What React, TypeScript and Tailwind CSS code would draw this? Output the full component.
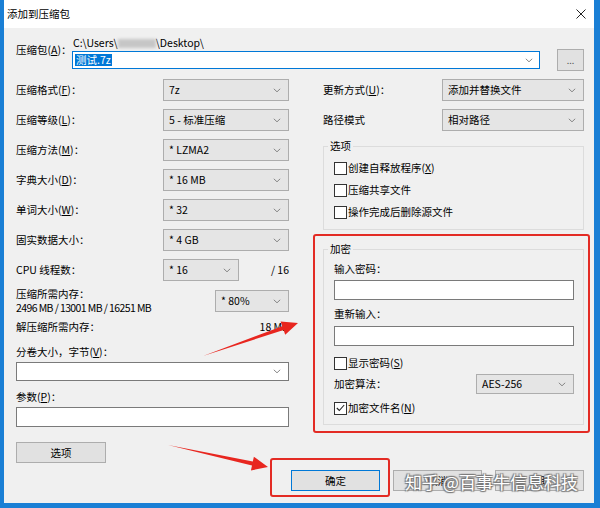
import React from "react";

function Chevron() {
  return (
    <svg width="8" height="5" viewBox="0 0 8 5" className="shrink-0">
      <path d="M0.8 0.8 L4 3.8 L7.2 0.8" fill="none" stroke="#7a7a7a" strokeWidth="0.9" />
    </svg>
  );
}

function Combo({ value, className }: { value: string; className: string }) {
  return (
    <div
      className={
        "flex items-center justify-between border border-[#adadad] bg-[#e5e5e5] pl-[5px] pr-[7px] " +
        className
      }
    >
      <span className="leading-[14px] whitespace-nowrap">{value}</span>
      <Chevron />
    </div>
  );
}

function Check({ label, checked, className }: { label: React.ReactNode; checked?: boolean; className: string }) {
  return (
    <div className={"flex items-center " + className}>
      <span className="w-[13px] h-[13px] border border-[#333333] bg-white flex items-center justify-center shrink-0">
        {checked && (
          <svg width="9" height="8" viewBox="0 0 9 8">
            <path d="M0.8 4 L3.3 6.5 L8.2 1" fill="none" stroke="#222" strokeWidth="1.1" />
          </svg>
        )}
      </span>
      <span className="ml-[1px] leading-[14px] whitespace-nowrap">{label}</span>
    </div>
  );
}

function Row({ label, value, labelW, comboW }: { label: React.ReactNode; value: string; labelW: string; comboW: string }) {
  return (
    <div className="flex items-center h-[22px]">
      <span className={"leading-[14px] whitespace-nowrap " + labelW}>{label}</span>
      <Combo value={value} className={"h-[22px] " + comboW} />
    </div>
  );
}

function Btn({ label, className }: { label: string; className: string }) {
  return (
    <div
      className={
        "flex items-center justify-center bg-[#e1e1e1] border leading-[14px] " + className
      }
    >
      {label}
    </div>
  );
}

export default function App() {
  return (
    <div className="relative w-[600px] h-[508px] overflow-hidden bg-[#1a7fd5] font-['Noto_Sans_CJK_SC',sans-serif] text-[10.5px] text-black">
      <div className="ml-[4px] w-[590px] h-[503px] bg-[#f0f0f0] flex flex-col">
        {/* Title bar */}
        <div className="h-[28px] shrink-0 bg-white flex items-center justify-between pl-[3px] pr-[8px]">
          <span className="leading-[14px]">添加到压缩包</span>
          <svg width="10" height="10" viewBox="0 0 10 10">
            <path d="M0.5 0.5 L9.5 9.5 M9.5 0.5 L0.5 9.5" stroke="#222" strokeWidth="1" />
          </svg>
        </div>

        <div className="pl-[12px] flex flex-col">
          {/* Archive header */}
          <div className="mt-[8px] flex items-start">
            <div className="w-[56px] mt-[7px] leading-[14px] whitespace-nowrap">
              压缩包(<u>A</u>)：
            </div>
            <div className="w-[468px] flex flex-col">
              <div className="h-[14px] leading-[14px] flex items-center pl-[1px] whitespace-nowrap">
                <span>C:\Users\</span>
                <span className="inline-block w-[38px] h-[9px] bg-[#c6c6c6] blur-[1.5px]" />
                <span>\Desktop\</span>
              </div>
              <div className="mt-[1px] h-[18px] bg-white border border-[#0078d7] flex items-center justify-between pl-[2px] pr-[6px]">
                <span className="bg-[#0078d7] text-white leading-[12px] px-[1px]">测试.7z</span>
                <Chevron />
              </div>
            </div>
            <div className="ml-[17px] mt-[13px] w-[27px] h-[22px] border border-[#adadad] bg-[#e1e1e1] flex items-center justify-center text-[9px] text-[#555555] leading-none">
              ...
            </div>
          </div>

          {/* Two columns */}
          <div className="mt-[8px] flex items-start">
            {/* Left column */}
            <div className="w-[273px] flex flex-col">
              <div className="flex flex-col gap-[8px]">
                <Row label={<>压缩格式(<u>F</u>)：</>} value="7z" labelW="w-[147px]" comboW="w-[126px]" />
                <Row label={<>压缩等级(<u>L</u>)：</>} value="5 - 标准压缩" labelW="w-[147px]" comboW="w-[126px]" />
                <Row label={<>压缩方法(<u>M</u>)：</>} value="* LZMA2" labelW="w-[147px]" comboW="w-[126px]" />
                <Row label={<>字典大小(<u>D</u>)：</>} value="* 16 MB" labelW="w-[147px]" comboW="w-[126px]" />
                <Row label={<>单词大小(<u>W</u>)：</>} value="* 32" labelW="w-[147px]" comboW="w-[126px]" />
                <Row label="固实数据大小：" value="* 4 GB" labelW="w-[147px]" comboW="w-[126px]" />
                <div className="flex items-center h-[22px]">
                  <span className="w-[147px] leading-[14px]">CPU 线程数：</span>
                  <Combo value="* 16" className="h-[22px] w-[76px]" />
                  <span className="flex-1 text-right leading-[14px]">/ 16</span>
                </div>
              </div>

              <div className="mt-[6px] flex items-center">
                <div className="flex-1 flex flex-col">
                  <span className="leading-[14px]">压缩所需内存：</span>
                  <span className="leading-[14px] tracking-[-0.6px] whitespace-nowrap">2496 MB / 13001 MB / 16251 MB</span>
                </div>
                <Combo value="* 80%" className="h-[22px] w-[74px]" />
              </div>

              <div className="mt-[5px] flex justify-between leading-[14px]">
                <span>解压缩所需内存：</span>
                <span>18 MB</span>
              </div>

              <div className="mt-[11px] leading-[14px]">
                分卷大小，字节(<u>V</u>)：
              </div>
              <div className="mt-[3px] h-[19px] bg-white border border-[#7a7a7a] flex items-center justify-end pr-[7px]">
                <Chevron />
              </div>

              <div className="mt-[9px] leading-[14px]">
                参数(<u>P</u>)：
              </div>
              <div className="mt-[3px] h-[20px] bg-white border border-[#7a7a7a]" />

              <Btn label="选项" className="mt-[15px] w-[90px] h-[21px] border-[#adadad]" />
            </div>

            {/* Right column */}
            <div className="ml-[34px] w-[261px] flex flex-col">
              <div className="flex flex-col gap-[8px]">
                <Row label={<>更新方式(<u>U</u>)：</>} value="添加并替换文件" labelW="w-[119px]" comboW="w-[142px]" />
                <Row label="路径模式" value="相对路径" labelW="w-[119px]" comboW="w-[142px]" />
              </div>

              <fieldset className="mt-[8px] border border-[#dcdcdc] pb-[6px]">
                <legend className="ml-[4px] px-[2px] leading-[14px]">选项</legend>
                <div className="mt-[4px] flex flex-col">
                  <Check className="h-[22px] pl-[10px]" label={<>创建自释放程序(<u>X</u>)</>} />
                  <Check className="h-[22px] pl-[10px]" label="压缩共享文件" />
                  <Check className="h-[22px] pl-[10px]" label="操作完成后删除源文件" />
                </div>
              </fieldset>

              <fieldset className="mt-[12px] border border-[#dcdcdc] pb-[8px]">
                <legend className="ml-[4px] px-[2px] leading-[14px]">加密</legend>
                <div className="flex flex-col pl-[10px] pr-[9px]">
                  <span className="mt-[6px] leading-[14px]">输入密码：</span>
                  <div className="mt-[4px] h-[20px] w-[240px] bg-white border border-[#7a7a7a]" />
                  <span className="mt-[7px] leading-[14px]">重新输入：</span>
                  <div className="mt-[5px] h-[20px] w-[240px] bg-white border border-[#7a7a7a]" />
                  <Check className="mt-[9px] h-[16px]" label={<>显示密码(<u>S</u>)</>} />
                  <div className="mt-[3px] h-[20px] flex items-center">
                    <span className="flex-1 leading-[14px]">加密算法：</span>
                    <Combo value="AES-256" className="h-[20px] w-[98px]" />
                  </div>
                  <Check className="mt-[6px] h-[16px]" checked label={<>加密文件名(<u>N</u>)</>} />
                </div>
              </fieldset>
            </div>
          </div>

          {/* Bottom buttons */}
          <div className="mt-[7px] w-[568px] flex justify-end gap-[13px]">
            <Btn label="确定" className="w-[89px] h-[21px] border-[#0078d7]" />
            <Btn label="取消" className="w-[89px] h-[21px] border-[#adadad]" />
            <Btn label="帮助" className="w-[89px] h-[21px] border-[#adadad]" />
          </div>
        </div>
      </div>

      {/* Annotations */}
      <div className="absolute left-[313px] top-[234px] w-[277px] h-[199px] border-2 border-[#e32b24] rounded-[3px] pointer-events-none" />
      <div className="absolute left-[270px] top-[458px] w-[120px] h-[39px] border-2 border-[#e32b24] rounded-[3px] pointer-events-none" />
      <svg className="absolute left-0 top-0 pointer-events-none" width="600" height="508" viewBox="0 0 600 508">
        <polygon points="203,356 282.2,326.3 280.6,321.6 298,323 285.2,334.8 283.6,330.1" fill="#e8261f" />
        <polygon points="168,445 252.8,461.6 253.9,456.8 268,467 250.9,470.4 252,465.6" fill="#e8261f" />
      </svg>
      <div className="absolute left-[405px] top-[471px] text-[17px] leading-[22px] text-white whitespace-nowrap pointer-events-none [text-shadow:1px_1px_1px_#7a7a7a,-1px_-1px_1px_#7a7a7a,1px_-1px_1px_#7a7a7a,-1px_1px_1px_#7a7a7a]">
        知乎 @百事牛信息科技
      </div>
    </div>
  );
}
